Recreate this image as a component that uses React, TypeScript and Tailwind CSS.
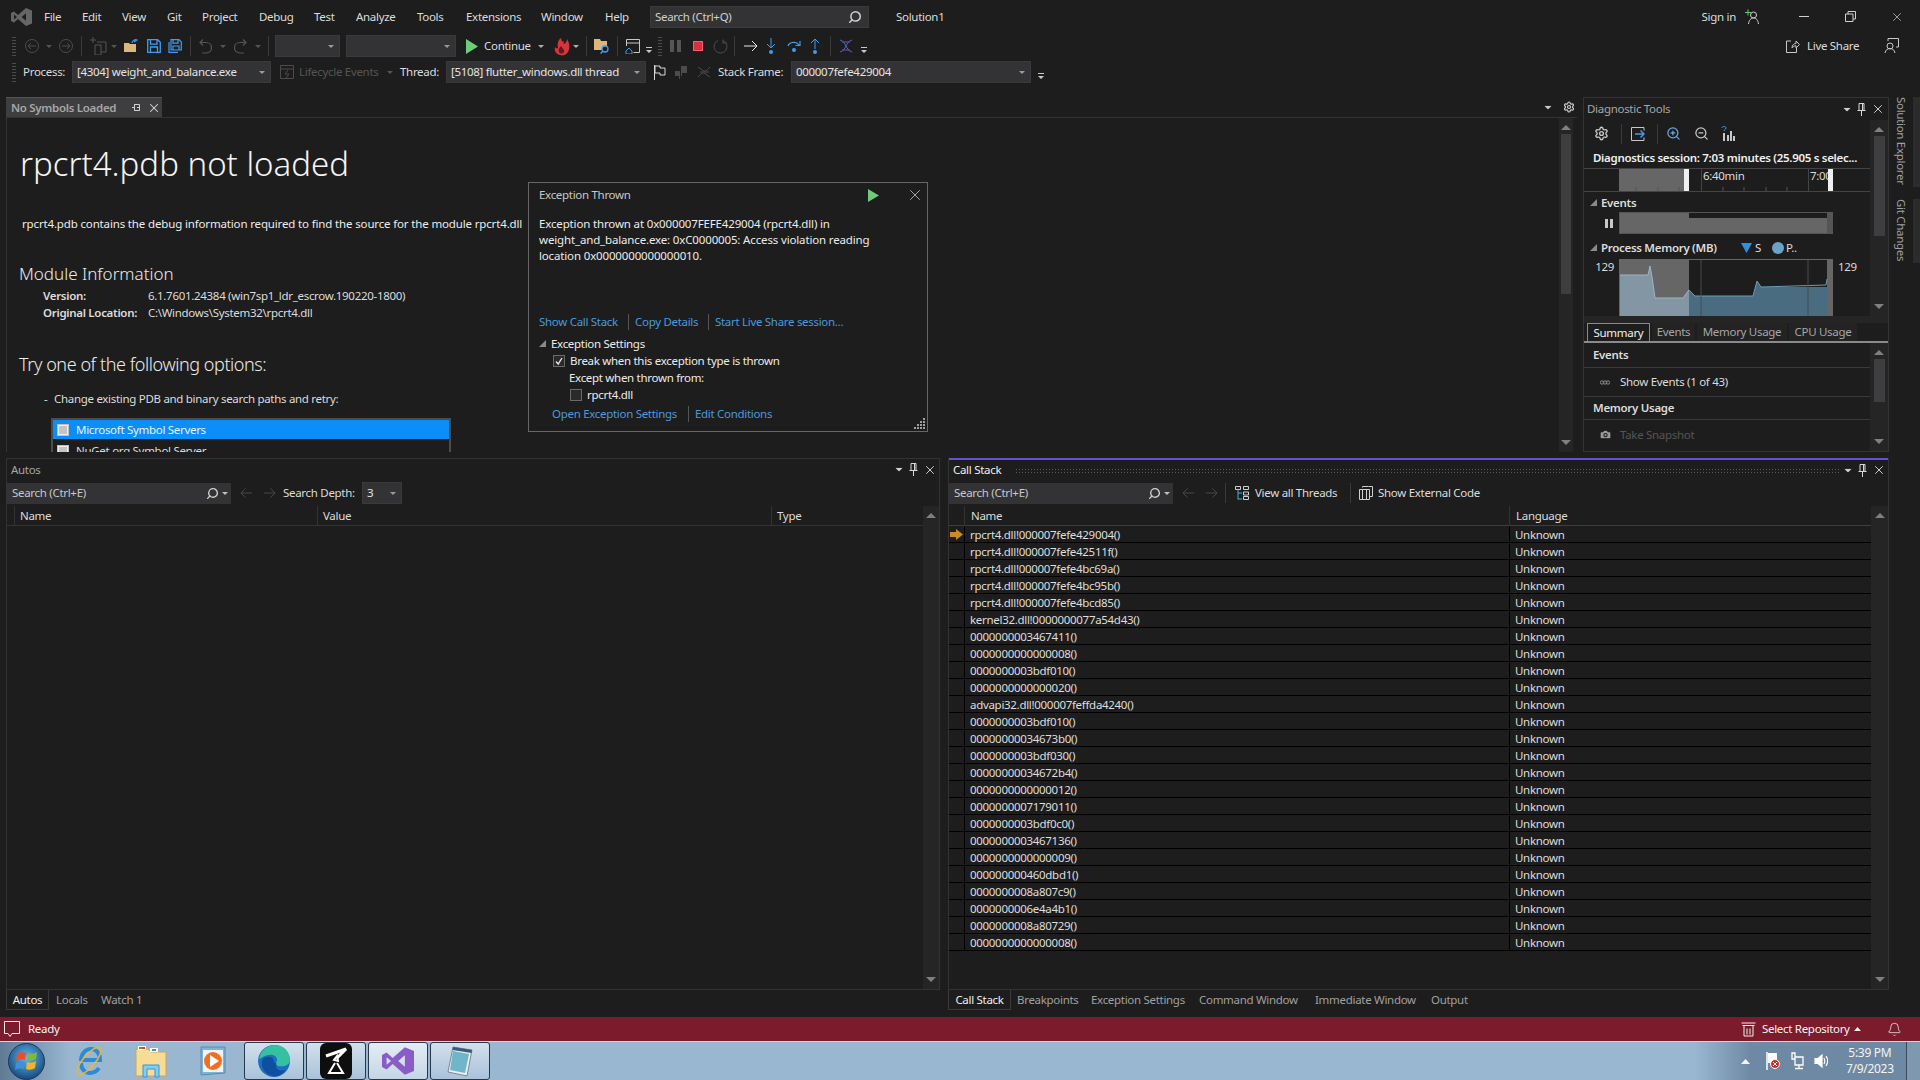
import { X, Settings, ZoomIn, ZoomOut, Camera, Bell, Search } from "lucide-react";

const frames = [
  "rpcrt4.dll!000007fefe429004()",
  "rpcrt4.dll!000007fefe42511f()",
  "rpcrt4.dll!000007fefe4bc69a()",
  "rpcrt4.dll!000007fefe4bc95b()",
  "rpcrt4.dll!000007fefe4bcd85()",
  "kernel32.dll!0000000077a54d43()",
  "0000000003467411()",
  "0000000000000008()",
  "0000000003bdf010()",
  "0000000000000020()",
  "advapi32.dll!000007feffda4240()",
  "0000000003bdf010()",
  "00000000034673b0()",
  "0000000003bdf030()",
  "00000000034672b4()",
  "0000000000000012()",
  "0000000007179011()",
  "0000000003bdf0c0()",
  "0000000003467136()",
  "0000000000000009()",
  "000000000460dbd1()",
  "0000000008a807c9()",
  "0000000006e4a4b1()",
  "0000000008a80729()",
  "0000000000000008()",
];

const menu = [
  ["File", "w-[38px]"],
  ["Edit", "w-[40px]"],
  ["View", "w-[45px]"],
  ["Git", "w-[35px]"],
  ["Project", "w-[57px]"],
  ["Debug", "w-[55px]"],
  ["Test", "w-[42px]"],
  ["Analyze", "w-[61px]"],
  ["Tools", "w-[49px]"],
  ["Extensions", "w-[75px]"],
  ["Window", "w-[64px]"],
  ["Help", "w-[45px]"],
];

const Caret = ({ className = "", color = "#b0b0b0" }: { className?: string; color?: string }) => (
  <svg viewBox="0 0 6 3" className={`h-[3px] w-[6px] shrink-0 ${className}`}>
    <path d="M0 0h6L3 3z" fill={color} />
  </svg>
);

const Sep = ({ className = "" }: { className?: string }) => (
  <div className={`h-[20px] w-px shrink-0 bg-[#3a3a3a] ${className}`} />
);

const Gripper = ({ className = "" }: { className?: string }) => (
  <div className={`h-[21px] w-[4px] shrink-0 bg-[radial-gradient(circle,#4c4c4c_0.6px,transparent_0.7px)] bg-[length:2px_3px] ${className}`} />
);

const Overflow = ({ className = "" }: { className?: string }) => (
  <svg viewBox="0 0 6 7" className={`mt-[8px] h-[7px] w-[6px] shrink-0 ${className}`}>
    <path d="M0 0h6v1H0zM0 3h6L3 6z" fill="#c8c8c8" />
  </svg>
);

const Combo = ({ children, className = "" }: { children?: React.ReactNode; className?: string }) => (
  <div className={`flex h-[22px] shrink-0 items-center justify-between border border-[#3a3a3c] bg-[#333335] pl-[4px] pr-[5px] text-[#e4e4e4] ${className}`}>
    <span className="whitespace-nowrap">{children}</span>
    <Caret color="#9a9a9a" />
  </div>
);

const Arrows = () => (
  <>
    <svg viewBox="0 0 14 12" className="ml-[9px] h-[12px] w-[13px] shrink-0" fill="none" stroke="#4c4c4c" strokeWidth="1">
      <path d="M13 6H1M6 1L1 6l5 5" />
    </svg>
    <svg viewBox="0 0 14 12" className="ml-[10px] h-[12px] w-[13px] shrink-0" fill="none" stroke="#4c4c4c" strokeWidth="1">
      <path d="M1 6h12M8 1l5 5-5 5" />
    </svg>
  </>
);

const SearchBox = ({ text }: { text: string }) => (
  <div className="flex h-[21px] w-[224px] shrink-0 items-center justify-between bg-[#333335] pl-[5px] pr-[3px] text-[#c8c8c8]">
    <span>{text}</span>
    <span className="flex items-center gap-[3px]">
      <Search size={13} strokeWidth={2.6} color="#d0d0d0" className="-scale-x-100" />
      <Caret color="#c0c0c0" />
    </span>
  </div>
);

const Pin = ({ className = "" }: { className?: string }) => (
  <svg viewBox="0 0 9 13" className={`h-[13px] w-[9px] shrink-0 ${className}`} fill="none" stroke="#d8d8d8">
    <path d="M2 .5h5v7H2zM.5 7.5h8M4.5 8v5M5.5 1v6" />
  </svg>
);

const ToolHead = () => (
  <span className="flex items-center">
    <Caret color="#d0d0d0" className="scale-125" />
    <Pin className="ml-[7px]" />
    <X size={14} strokeWidth={1.6} color="#d8d8d8" className="ml-[5px]" />
  </span>
);

const ScrollBar = ({ thumb, w = "w-[17px]", inner = "w-[10px]" }: { thumb: string; w?: string; inner?: string }) => (
  <div className={`flex h-full shrink-0 flex-col items-center bg-[#252526] ${w}`}>
    <svg viewBox="0 0 10 5" className="mt-[7px] h-[5px] w-[10px] shrink-0"><path d="M0 5h10L5 0z" fill="#808080" /></svg>
    <div className={`mt-[4px] bg-[#3e3e40] ${inner} ${thumb}`} />
    <div className="flex-1" />
    <svg viewBox="0 0 10 5" className="mb-[7px] h-[5px] w-[10px] shrink-0"><path d="M0 0h10L5 5z" fill="#808080" /></svg>
  </div>
);

const Tab = ({ label, active, className = "" }: { label: string; active?: boolean; className?: string }) => (
  <div className={`flex h-[20px] items-center whitespace-nowrap ${active ? "border-x border-b border-[#3a3a3a] text-[#f0f0f0]" : "text-[#a0a0a0]"} ${className}`}>
    {label}
  </div>
);

const Triangle = () => (
  <svg viewBox="0 0 7 7" className="h-[7px] w-[7px] shrink-0"><path d="M7 0v7H0z" fill="#8a8a8a" /></svg>
);

const Check = ({ on, className = "" }: { on?: boolean; className?: string }) => (
  <div className={`flex h-[12px] w-[12px] shrink-0 items-center justify-center border border-[#6a6a6a] bg-[#2a2a2a] ${className}`}>
    {on && (
      <svg viewBox="0 0 10 10" className="h-[10px] w-[10px]" fill="none" stroke="#e6e6e6" strokeWidth="1.4">
        <path d="M2 5.5L4.2 8 8 2" />
      </svg>
    )}
  </div>
);

const ListCheck = () => (
  <div className="flex h-[12px] w-[12px] shrink-0 items-center justify-center border border-[#c0c0c0] bg-[#f0f0f0]">
    <div className="h-[8px] w-[8px] bg-[#c4c4c4]" />
  </div>
);

const VsMark = ({ fill, className = "" }: { fill: string; className?: string }) => (
  <svg viewBox="0 0 21 18" className={className}>
    <path
      fillRule="evenodd"
      d="M0 5l3-1.5L7 7l8-7 6 2.5v13L15 18l-8-7-4 3.5L0 13zM3 6.5v5L6 9zM15 5.2L10.6 9l4.4 3.8z"
      fill={fill}
    />
  </svg>
);

const TitleBar = () => (
  <div className="flex h-[33px] shrink-0 items-center">
    <VsMark fill="#666666" className="ml-[11px] h-[18px] w-[21px] shrink-0" />
    <nav className="ml-[12px] flex">
      {menu.map(([label, w]) => (
        <span key={label} className={`whitespace-nowrap ${w}`}>{label}</span>
      ))}
    </nav>
    <div className="flex h-[22px] w-[219px] shrink-0 items-center justify-between border border-[#3a3a3c] bg-[#333335] pl-[4px] pr-[6px] text-[#cfcfcf]">
      <span>Search (Ctrl+Q)</span>
      <Search size={14} strokeWidth={2.6} color="#d0d0d0" className="-scale-x-100" />
    </div>
    <span className="ml-[27px] text-[#dcdcdc]">Solution1</span>
    <span className="ml-auto">Sign in</span>
    <svg viewBox="0 0 16 16" className="ml-[8px] h-[16px] w-[16px] shrink-0" fill="none" stroke="#d0d0d0">
      <circle cx="9.5" cy="6" r="3" />
      <path d="M4.5 15c.5-4 2.5-6 5-6s4.500 2 5 6" />
      <path d="M1 3.500h6M4 .5v6" stroke="#5fd068" />
    </svg>
    <div className="ml-[39px] h-px w-[10px] bg-[#d0d0d0]" />
    <svg viewBox="0 0 11 11" className="ml-[36px] h-[11px] w-[11px]" fill="none" stroke="#d0d0d0">
      <path d="M.5 3h7.500v7.500H.5zM3 3V.5h7.500V8H8" />
    </svg>
    <X size={14} strokeWidth={1.2} color="#d0d0d0" className="ml-[34px] mr-[16px]" />
  </div>
);

const Toolbar1 = () => (
  <div className="flex h-[26px] shrink-0 items-center">
    <Gripper className="ml-[12px]" />
    <svg viewBox="0 0 14 14" className="ml-[9px] h-[14px] w-[14px] shrink-0" fill="none" stroke="#4c4c4c"><circle cx="7" cy="7" r="6.500" /><path d="M11 7H3M6 4L3 7l3 3" /></svg>
    <Caret className="ml-[7px]" color="#555" />
    <svg viewBox="0 0 14 14" className="ml-[7px] h-[14px] w-[14px] shrink-0" fill="none" stroke="#4c4c4c"><circle cx="7" cy="7" r="6.500" /><path d="M3 7h8M8 4l3 3-3 3" /></svg>
    <Sep className="ml-[8px]" />
    <svg viewBox="0 0 17 18" className="ml-[8px] h-[18px] w-[17px] shrink-0" fill="none" stroke="#555"><path d="M7 5h9v10h-5v3H5V8h6v7M3 0v6M0 3h6" /></svg>
    <Caret className="ml-[4px]" color="#555" />
    <svg viewBox="0 0 15 14" className="ml-[7px] h-[14px] w-[15px] shrink-0">
      <path d="M0 4h5l1 1h6v8H0z" fill="#dcb67a" />
      <path d="M8 4c0-2 2-3 4-3M10-.5L13 1l-3 2" fill="none" stroke="#2f8fe0" strokeWidth="1.300" />
    </svg>
    <svg viewBox="0 0 14 14" className="ml-[8px] h-[14px] w-[14px] shrink-0" fill="none" stroke="#3f9cf0" strokeWidth="1.300"><path d="M.7.7h10l2.600 2.600v10H.7zM3.500.7v4.500h6.500V.7M3.500 13.300V8h7v5.300" /></svg>
    <svg viewBox="0 0 14 14" className="ml-[7px] h-[14px] w-[14px] shrink-0" fill="none" stroke="#3f9cf0" strokeWidth="1.200"><path d="M3 .7h8l2.300 2.300v8H3zM5 .7v3.500h5V.7M5 11V7h6v4M1 3v10.300h9" /></svg>
    <Sep className="ml-[8px]" />
    <svg viewBox="0 0 13 15" className="ml-[8px] h-[15px] w-[13px] shrink-0" fill="none" stroke="#555" strokeWidth="1.200"><path d="M3 14h4c3.500 0 5.500-2.500 5.500-5.500S10 3.500 7 3.500H1M4 .5l-3 3 3 3" /></svg>
    <Caret className="ml-[8px]" color="#555" />
    <svg viewBox="0 0 13 15" className="ml-[8px] h-[15px] w-[13px] shrink-0" fill="none" stroke="#555" strokeWidth="1.200"><path d="M10 14H6C2.500 14 .5 11.500.5 8.500S3 3.500 6 3.500h6M9 .5l3 3-3 3" /></svg>
    <Caret className="ml-[8px]" color="#555" />
    <Sep className="ml-[7px]" />
    <Combo className="ml-[6px] w-[65px] bg-[#2c2c2c]" />
    <Combo className="ml-[6px] w-[110px] bg-[#2c2c2c]" />
    <svg viewBox="0 0 12 15" className="ml-[10px] h-[15px] w-[12px] shrink-0"><path d="M0 0l12 7.500L0 15z" fill="#6ecb78" /></svg>
    <span className="ml-[6px] w-[48px] whitespace-nowrap">Continue</span>
    <Caret className="ml-[6px]" />
    <svg viewBox="0 0 17 19" className="ml-[9px] h-[19px] w-[17px] shrink-0">
      <path d="M8 1c1 3 0 4 3 3 0 1-1 2 0 3 2-1 3-3 3-5 3 5 3 9 1 13-2 3-5 4-8 3C3 17 1 14 2 10c1 1 2 2 3 1-1-4 0-8 3-10z" fill="#d9343c" />
      <path d="M8 9c-2 2-3 4-2 6 1 2 4 2 5 0 1-2-1-3-3-6z" fill="#5a1d22" />
    </svg>
    <Caret className="ml-[3px]" />
    <Sep className="ml-[7px]" />
    <svg viewBox="0 0 16 16" className="ml-[7px] h-[16px] w-[16px] shrink-0">
      <path d="M0 1h6l1 2h6v9H0z" fill="#dcb67a" />
      <circle cx="11" cy="11" r="3" fill="#1d1d1d" stroke="#3f9cf0" strokeWidth="1.300" />
      <path d="M9 13l-2.500 2.500" stroke="#3f9cf0" strokeWidth="1.500" />
    </svg>
    <Sep className="ml-[7px]" />
    <svg viewBox="0 0 16 16" className="ml-[7px] h-[16px] w-[16px] shrink-0" fill="none" stroke="#c8c8c8"><path d="M1.500 1.500h13v13h-6M1.500 5h13M1.500 1.500V8" /><path d="M1 13l3-3 3 3v3H1z" stroke="#3f9cf0" /></svg>
    <Overflow className="ml-[5px]" />
    <Gripper className="ml-[6px]" />
    <div className="ml-[8px] flex h-[12px] w-[11px] shrink-0 justify-between"><i className="w-[4px] bg-[#555]" /><i className="w-[4px] bg-[#555]" /></div>
    <div className="ml-[12px] h-[10px] w-[10px] shrink-0 border border-[#f06070] bg-[#d8303f]" />
    <svg viewBox="0 0 15 15" className="ml-[10px] h-[15px] w-[15px] shrink-0" fill="none" stroke="#4c4c4c"><path d="M10 1.500A6.500 6.500 0 1 1 5 1.500M10 .5v3.500h3.500" /></svg>
    <Sep className="ml-[6px]" />
    <svg viewBox="0 0 14 12" className="ml-[9px] h-[12px] w-[14px] shrink-0" fill="none" stroke="#e8e8e8"><path d="M0 6h13M8 1l5 5-5 5" /></svg>
    <svg viewBox="0 0 12 16" className="ml-[7px] h-[16px] w-[12px] shrink-0"><path d="M6 0v9M2 6l4 4 4-4" fill="none" stroke="#3f9cf0" /><circle cx="6" cy="14" r="2" fill="#3f9cf0" /></svg>
    <svg viewBox="0 0 14 12" className="ml-[10px] h-[12px] w-[14px] shrink-0"><path d="M1 6a6 5 0 0 1 11-1M13 1v4.500H8.500" fill="none" stroke="#3f9cf0" strokeWidth="1.200" /><circle cx="7" cy="10" r="2" fill="#3f9cf0" /></svg>
    <svg viewBox="0 0 12 16" className="ml-[8px] h-[16px] w-[12px] shrink-0"><path d="M6 11V1M2 5l4-4 4 4" fill="none" stroke="#3f9cf0" /><circle cx="6" cy="14" r="2" fill="#3f9cf0" /></svg>
    <Sep className="ml-[9px]" />
    <svg viewBox="0 0 14 16" className="ml-[8px] h-[16px] w-[14px] shrink-0" fill="none" strokeWidth="1"><path d="M1 14C8 12 6 4 13 2" stroke="#6a56b8" /><path d="M1 2c7 2 5 10 12 12" stroke="#2f7cc0" /><path d="M3 4h8M3 12h8" stroke="#6a56b8" /></svg>
    <Overflow className="ml-[8px]" />
    <svg viewBox="0 0 14 14" className="ml-auto h-[14px] w-[14px] shrink-0" fill="none" stroke="#c8c8c8"><path d="M5 2H.5v11.500h10V9M6 9c0-3 2-4.500 4-4.500V2l3.500 3.500L10 9V6.800C8 6.800 7 8 6 9z" /></svg>
    <span className="ml-[7px] w-[77px] whitespace-nowrap">Live Share</span>
    <svg viewBox="0 0 15 16" className="mr-[21px] h-[16px] w-[15px] shrink-0" fill="none" stroke="#c8c8c8"><circle cx="6" cy="8" r="3" /><path d="M1 15c.5-3 2.500-4.500 5-4.500s4.500 1.500 5 4.500M4 3V.5h10.500V9H12" /></svg>
  </div>
);

const Toolbar2 = () => (
  <div className="flex h-[26px] shrink-0 items-center">
    <Gripper className="ml-[12px]" />
    <span className="ml-[7px] w-[49px] whitespace-nowrap">Process:</span>
    <Combo className="w-[199px]">[4304] weight_and_balance.exe</Combo>
    <svg viewBox="0 0 14 14" className="ml-[9px] h-[14px] w-[14px] shrink-0" fill="none" stroke="#4c4c4c"><path d="M.5.5h13v13H.5zM.5 4h13M8 5L5 9h4l-3 4" /></svg>
    <span className="ml-[5px] w-[83px] whitespace-nowrap text-[#555]">Lifecycle Events</span>
    <Caret className="ml-[5px]" color="#555" />
    <span className="ml-[7px] w-[46px] whitespace-nowrap">Thread:</span>
    <Combo className="w-[200px]">[5108] flutter_windows.dll thread</Combo>
    <svg viewBox="0 0 12 15" className="ml-[8px] h-[15px] w-[12px] shrink-0"><path d="M.5 0v15" stroke="#d8d8d8" /><path d="M1 1h5v2h5v7H6V8H1z" fill="none" stroke="#d8d8d8" /></svg>
    <svg viewBox="0 0 13 15" className="ml-[9px] h-[15px] w-[13px] shrink-0" fill="#4c4c4c"><path d="M0 6h5v8H4v-3H0zM6 1h6v7H7v3H6z" /></svg>
    <svg viewBox="0 0 15 12" className="ml-[9px] h-[12px] w-[15px] shrink-0" fill="none" stroke="#4c4c4c"><path d="M1 1l3 2c3 3 5 3 9-2M1 11c4-5 6-5 9-2l3 2M3 6h9" /></svg>
    <span className="ml-[6px] w-[73px] whitespace-nowrap">Stack Frame:</span>
    <Combo className="w-[240px]">000007fefe429004</Combo>
    <Overflow className="ml-[7px]" />
  </div>
);

const DocPanel = () => (
  <div className="flex h-full w-[1571px] shrink-0 flex-col">
    <div className="flex h-[20px] shrink-0 items-center">
      <div className="flex h-full w-[156px] items-center border-t border-[#555] bg-[#3e3e40] pl-[5px] font-semibold text-[#a6a6a6]">
        <span className="w-[121px] whitespace-nowrap">No Symbols Loaded</span>
        <svg viewBox="0 0 9 9" className="h-[9px] w-[9px]" fill="none" stroke="#d0d0d0"><path d="M0 4.500h2M2.500 1.500h5v6h-5zM2.500 1.500v6M7 4.500H5" /></svg>
        <X size={14} strokeWidth={1.8} color="#d8d8d8" className="ml-[6px]" />
      </div>
      <Caret className="ml-auto scale-125" color="#c8c8c8" />
      <Settings size={12} strokeWidth={2.4} color="#d0d0d0" className="ml-[12px] mr-[2px]" />
    </div>
    <div className="flex min-h-0 flex-1 border-l border-t border-[#333]">
      <div className="min-w-0 flex-1 overflow-hidden">
        <h1 className="pl-[13px] pt-[26px] text-[33px] font-light leading-[40px] tracking-normal text-[#f4f4f4]">rpcrt4.pdb not loaded</h1>
        <p className="mt-[32px] pl-[15px] leading-[16px] tracking-[-0.15px] text-[#ececec]">
          rpcrt4.pdb contains the debug information required to find the source for the module rpcrt4.dll
        </p>
        <h2 className="mt-[31px] pl-[12px] text-[17px] font-light leading-[22px] tracking-normal text-[#ececec]">Module Information</h2>
        <div className="ml-[36px] mt-[2px] grid w-[500px] grid-cols-[105px_1fr] leading-[17px]">
          <b className="font-semibold">Version:</b>
          <span>6.1.7601.24384 (win7sp1_ldr_escrow.190220-1800)</span>
          <b className="font-semibold">Original Location:</b>
          <span>C:\Windows\System32\rpcrt4.dll</span>
        </div>
        <h2 className="mt-[31px] pl-[12px] text-[18px] font-light leading-[24px] tracking-[-0.43px] text-[#ececec]">Try one of the following options:</h2>
        <p className="ml-[37px] mt-[15px] flex leading-[16px]">
          <span className="w-[10px]">-</span>
          <span>Change existing PDB and binary search paths and retry:</span>
        </p>
        <div className="ml-[44px] mt-[11px] w-[400px] border-2 border-[#4c4c4c] pb-[20px]">
          <div className="flex h-[19px] items-center bg-[#0a8ffa] pl-[4px] text-[#f0f0f0]">
            <ListCheck />
            <span className="ml-[7px]">Microsoft Symbol Servers</span>
          </div>
          <div className="mt-[2px] flex h-[19px] items-center pl-[4px]">
            <ListCheck />
            <span className="ml-[7px]">NuGet.org Symbol Server</span>
          </div>
        </div>
      </div>
      <ScrollBar w="w-[14px]" inner="w-[10px]" thumb="h-[160px]" />
      <div className="w-[4px]" />
    </div>
  </div>
);

const MemoryChart = () => (
  <svg viewBox="0 0 214 57" className="h-[57px] w-[214px] shrink-0">
    <rect width="70" height="57" fill="#666" />
    <rect x="208" width="6" height="57" fill="#666" />
    <path d="M1 16H29L31 7 33 18 36 39H64L70 31V57H0V16z" fill="#8296a4" />
    <path d="M70 31L76 37H134L138 22 142 28H208V57H70z" fill="#4a6c80" />
    <path d="M1 16H29L31 7 33 18 36 39H64L70 31" fill="none" stroke="#a4b4c0" />
    <path d="M70 31L76 37H134L138 22 142 28 207 26 208 20" fill="none" stroke="#6b9db8" />
    <path d="M82 0V57M189 0V57" stroke="#4a4a4a" />
    <path d="M.5 57V.5H214M213.500 0V57" fill="none" stroke="#666" />
  </svg>
);

const DiagPanel = () => (
  <div className="ml-[6px] flex h-full w-[306px] shrink-0 flex-col border border-[#333]">
    <div className="flex h-[22px] shrink-0 items-center justify-between pl-[3px] pr-[3px] text-[#a6a6a6]">
      <span>Diagnostic Tools</span>
      <ToolHead />
    </div>
    <div className="flex h-[196px] shrink-0">
      <div className="min-w-0 flex-1 overflow-hidden">
        <div className="flex h-[27px] items-center">
          <Settings size={15} strokeWidth={2.2} color="#c8c8c8" className="ml-[10px]" />
          <Sep className="ml-[12px]" />
          <svg viewBox="0 0 14 14" className="ml-[9px] h-[14px] w-[14px]" fill="none"><path d="M13 .5H.5v13H13M13 .5v3M13 13.500v-3" stroke="#c8c8c8" /><path d="M4 7h9M9.500 3.500L13 7l-3.500 3.500" stroke="#3f9cf0" strokeWidth="1.500" /></svg>
          <Sep className="ml-[12px]" />
          <ZoomIn size={15} color="#6aa8e0" className="ml-[8px]" />
          <ZoomOut size={15} color="#c8c8c8" className="ml-[13px]" />
          <svg viewBox="0 0 14 15" className="ml-[12px] h-[15px] w-[14px]"><path d="M2 7h2v8H2zM6 9h2v6H6zM9 5h2v10H9zM12 10h2v5h-2z" fill="#c8c8c8" /><path d="M1 2c0-2 4-2 4 0 0 1.500-2 1.500-2 3" fill="none" stroke="#3f9cf0" /></svg>
        </div>
        <div className="flex h-[21px] items-center pl-[9px] font-semibold text-[#f0f0f0]">
          <span className="whitespace-nowrap">Diagnostics session: 7:03 minutes (25.905 s selec...</span>
        </div>
        <div className="h-[24px] border-y border-[#444] pl-[35px]">
          <div className="relative flex h-full w-[214px] leading-[14px]">
            <div className="w-[65px] bg-[#666]" />
            <div className="w-[5px] bg-[#f0f0f0]" />
            <div className="w-[12px]" />
            <div className="w-[107px] border-l border-[#444] pl-[1px]">6:40min</div>
            <div className="w-[20px] overflow-hidden border-l border-[#444] pl-[1px]">7:00</div>
            <div className="w-[5px] bg-[#f0f0f0]" />
            <svg viewBox="0 0 214 4" className="absolute bottom-0 left-0 h-[4px] w-[214px]">
              <path d="M17 0v4M39 0v4M60 0v4M104 0v4M125 0v4M147 0v4M168 0v4" stroke="#555" />
            </svg>
          </div>
        </div>
        <div className="flex h-[20px] items-center pl-[6px] pt-[1px] font-semibold">
          <Triangle />
          <span className="ml-[4px]">Events</span>
        </div>
        <div className="flex h-[22px]">
          <div className="flex w-[35px] items-center justify-end pr-[6px]">
            <div className="flex h-[9px] w-[8px] justify-between"><i className="w-[3px] bg-[#c8c8c8]" /><i className="w-[3px] bg-[#c8c8c8]" /></div>
          </div>
          <div className="flex w-[214px] border border-[#555]">
            <div className="w-[69px] bg-[#666]" />
            <div className="flex flex-1 flex-col"><div className="h-[5px]" /><div className="flex-1 bg-[#666]" /></div>
            <div className="w-[5px] bg-[#555]" />
          </div>
        </div>
        <div className="flex h-[25px] items-center pl-[6px] pt-[2px] font-semibold">
          <Triangle />
          <span className="ml-[4px] w-[140px] whitespace-nowrap">Process Memory (MB)</span>
          <svg viewBox="0 0 11 10" className="h-[10px] w-[11px] shrink-0"><path d="M0 0h11L5.500 10z" fill="#2f8fe0" /></svg>
          <span className="ml-[3px] w-[17px] font-normal">S</span>
          <div className="h-[12px] w-[12px] shrink-0 rounded-full bg-[#6ba2c8]" />
          <span className="ml-[2px] font-normal">P..</span>
        </div>
        <div className="flex h-[57px]">
          <div className="w-[35px] pr-[5px] text-right leading-[16px]">129</div>
          <MemoryChart />
          <div className="pl-[5px] leading-[16px]">129</div>
        </div>
      </div>
      <ScrollBar w="w-[18px]" inner="w-[11px]" thumb="h-[100px]" />
    </div>
    <div className="h-[7px] shrink-0 bg-[#252526]" />
    <div className="flex h-[20px] shrink-0 items-stretch border-b-2 border-[#8a8a8a] pl-[3px] text-[#a6a6a6]">
      <div className="flex w-[63px] items-center justify-center border-x border-t border-[#8a8a8a] text-[#f0f0f0]">Summary</div>
      <div className="ml-[2px] flex w-[43px] items-center justify-center bg-[#232323]">Events</div>
      <div className="ml-[2px] flex w-[90px] items-center justify-center bg-[#232323]">Memory Usage</div>
      <div className="ml-[2px] flex w-[68px] items-center justify-center bg-[#232323]">CPU Usage</div>
    </div>
    <div className="flex min-h-0 flex-1">
      <div className="min-w-0 flex-1">
        <div className="flex h-[25px] items-center border-b border-[#3a3a3a] pl-[9px] font-semibold">Events</div>
        <div className="flex h-[29px] items-center border-b border-[#3a3a3a] pl-[16px]">
          <svg viewBox="0 0 10 5" className="h-[5px] w-[10px]" fill="none" stroke="#8a8a8a"><circle cx="2" cy="2.500" r="1.700" /><circle cx="5" cy="2.500" r="1.700" /><circle cx="8" cy="2.500" r="1.700" /></svg>
          <span className="ml-[10px]">Show Events (1 of 43)</span>
        </div>
        <div className="flex h-[23px] items-center border-b border-[#3a3a3a] pl-[9px] font-semibold">Memory Usage</div>
        <div className="flex h-[29px] items-center pl-[15px] text-[#555]">
          <Camera size={13} color="#1d1d1d" fill="#9a9a9a" />
          <span className="ml-[8px]">Take Snapshot</span>
        </div>
      </div>
      <ScrollBar w="w-[18px]" inner="w-[11px]" thumb="h-[43px]" />
    </div>
  </div>
);

const SideStrip = () => (
  <div className="flex h-full w-[31px] shrink-0 flex-col pl-[4px]">
    <div className="flex h-[90px] justify-between">
      <span className="whitespace-nowrap text-[#a0a0a0] [writing-mode:vertical-rl]">Solution Explorer</span>
      <div className="w-[7px] bg-[#2c2c2c]" />
    </div>
    <div className="mt-[12px] flex h-[64px] justify-between">
      <span className="whitespace-nowrap text-[#a0a0a0] [writing-mode:vertical-rl]">Git Changes</span>
      <div className="w-[7px] bg-[#2c2c2c]" />
    </div>
  </div>
);

const HeaderCell = ({ className, children }: { className: string; children?: React.ReactNode }) => (
  <div className={`flex h-full shrink-0 items-center border-r border-[#333] pl-[5px] ${className}`}>{children}</div>
);

const AutosPanel = () => (
  <div className="flex h-full w-[934px] shrink-0 flex-col">
    <div className="flex h-[532px] flex-col border-x border-y border-[#333]">
      <div className="flex h-[23px] shrink-0 items-center justify-between pb-[2px] pl-[4px] pr-[2px] text-[#a6a6a6]">
        <span>Autos</span>
        <ToolHead />
      </div>
      <div className="flex h-[24px] shrink-0 items-center pb-[2px]">
        <SearchBox text="Search (Ctrl+E)" />
        <Arrows />
        <span className="ml-[7px] w-[79px] whitespace-nowrap">Search Depth:</span>
        <Combo className="h-[20px] w-[40px]">3</Combo>
      </div>
      <div className="flex min-h-0 flex-1">
        <div className="min-w-0 flex-1">
          <div className="flex h-[20px] border-b border-[#333]">
            <HeaderCell className="w-[8px] !pl-0" />
            <HeaderCell className="w-[303px]">Name</HeaderCell>
            <HeaderCell className="w-[454px]">Value</HeaderCell>
            <div className="flex items-center pl-[5px]">Type</div>
          </div>
        </div>
        <ScrollBar w="w-[16px]" inner="w-[9px]" thumb="h-[0px]" />
      </div>
    </div>
    <div className="flex pl-[0px]">
      <Tab active label="Autos" className="w-[43px] justify-center" />
      <Tab label="Locals" className="ml-[7px] w-[45px]" />
      <Tab label="Watch 1" />
    </div>
  </div>
);

const CallStackPanel = () => (
  <div className="ml-[8px] flex h-full w-[941px] shrink-0 flex-col">
    <div className="flex h-[532px] flex-col border-x border-b border-[#333]">
      <div className="h-[2px] shrink-0 bg-[#6650d8]" />
      <div className="flex h-[22px] shrink-0 items-center pb-[2px] pl-[4px] pr-[2px]">
        <span className="w-[62px] whitespace-nowrap text-[#f0f0f0]">Call Stack</span>
        <div className="h-[5px] flex-1 bg-[radial-gradient(circle,#5a5a5a_0.7px,transparent_0.8px)] bg-[length:3px_3px]" />
        <div className="ml-[6px]"><ToolHead /></div>
      </div>
      <div className="flex h-[24px] shrink-0 items-center pb-[2px]">
        <SearchBox text="Search (Ctrl+E)" />
        <Arrows />
        <Sep className="ml-[7px]" />
        <svg viewBox="0 0 14 14" className="ml-[9px] h-[14px] w-[14px] shrink-0" fill="none" stroke="#d0d0d0"><path d="M.5.5h5v3h-5zM8.500.5h5v3h-5zM8.500 6h5v3h-5zM8.500 10.500h5v3h-5z" /><path d="M3 3.500V13.500M3 7h4M3 13h4" stroke="#39b5e8" /></svg>
        <span className="ml-[6px] w-[95px] whitespace-nowrap">View all Threads</span>
        <Sep />
        <svg viewBox="0 0 14 14" className="ml-[8px] h-[14px] w-[14px] shrink-0" fill="none" stroke="#d0d0d0"><path d="M3.500 1.500V.5h6l4 0v10h-3M.5 3.500h10v10H.5zM3.500 3.500h4v10h-4z" /></svg>
        <span className="ml-[5px] whitespace-nowrap">Show External Code</span>
      </div>
      <div className="flex min-h-0 flex-1">
        <div className="min-w-0 flex-1">
          <div className="flex h-[20px] border-b border-[#3e3e3e]">
            <HeaderCell className="w-[16px] !pl-0" />
            <HeaderCell className="w-[545px] !pl-[6px]">Name</HeaderCell>
            <div className="flex items-center pl-[6px]">Language</div>
          </div>
          {frames.map((f, i) => (
            <div key={i} className="flex h-[17px] items-center border-b border-black leading-[17px]">
              <div className="flex h-full w-[16px] shrink-0 items-center justify-center border-r border-black">
                {i === 0 && (
                  <svg viewBox="0 0 13 11" className="h-[11px] w-[13px]"><path d="M0 3h6V0l7 5.500L6 11V8H0z" fill="#cc8a24" /></svg>
                )}
              </div>
              <div className="h-full w-[545px] shrink-0 whitespace-nowrap border-r border-black pl-[5px] text-[#dedede]">{f}</div>
              <div className="h-full pl-[5px] text-[#dedede]">Unknown</div>
            </div>
          ))}
        </div>
        <ScrollBar inner="w-[9px]" thumb="h-[0px]" />
      </div>
    </div>
    <div className="flex pl-[0px]">
      <Tab active label="Call Stack" className="w-[63px] justify-center" />
      <Tab label="Breakpoints" className="ml-[6px] w-[74px]" />
      <Tab label="Exception Settings" className="w-[108px]" />
      <Tab label="Command Window" className="w-[116px]" />
      <Tab label="Immediate Window" className="w-[116px]" />
      <Tab label="Output" />
    </div>
  </div>
);

const ExceptionPopup = () => (
  <div className="absolute left-[528px] top-[182px] h-[250px] w-[400px] border border-[#666] bg-[#1d1d1d] pl-[10px] text-[#ececec]">
    <div className="flex h-[24px] items-center">
      <span className="text-[#c8c8c8]">Exception Thrown</span>
      <svg viewBox="0 0 11 13" className="ml-auto h-[13px] w-[11px]"><path d="M0 0l11 6.500L0 13z" fill="#6ecb78" /></svg>
      <X size={18} strokeWidth={1} color="#d0d0d0" className="ml-[27px] mr-[3px]" />
    </div>
    <p className="mt-[9px] w-[345px] leading-[16px] tracking-[-0.15px]">
      Exception thrown at 0x000007FEFE429004 (rpcrt4.dll) in weight_and_balance.exe: 0xC0000005: Access violation reading location 0x0000000000000010.
    </p>
    <div className="mt-[50px] flex h-[16px] items-center text-[#4a9ade]">
      <span className="w-[89px] whitespace-nowrap">Show Call Stack</span>
      <span className="h-[16px] w-px bg-[#555]" />
      <span className="ml-[6px] w-[73px] whitespace-nowrap">Copy Details</span>
      <span className="h-[16px] w-px bg-[#555]" />
      <span className="ml-[6px] whitespace-nowrap">Start Live Share session...</span>
    </div>
    <div className="mt-[5px] flex h-[17px] items-center">
      <Triangle />
      <span className="ml-[5px]">Exception Settings</span>
    </div>
    <div className="ml-[14px] flex h-[17px] items-center">
      <Check on />
      <span className="ml-[5px]">Break when this exception type is thrown</span>
    </div>
    <div className="ml-[30px] flex h-[17px] items-center">Except when thrown from:</div>
    <div className="ml-[31px] flex h-[17px] items-center">
      <Check />
      <span className="ml-[5px]">rpcrt4.dll</span>
    </div>
    <div className="ml-[13px] mt-[3px] flex h-[16px] items-center text-[#4a9ade]">
      <span className="w-[136px] whitespace-nowrap">Open Exception Settings</span>
      <span className="h-[16px] w-px bg-[#555]" />
      <span className="ml-[6px] whitespace-nowrap">Edit Conditions</span>
    </div>
    <svg viewBox="0 0 11 11" className="absolute bottom-[2px] right-[2px] h-[11px] w-[11px]" fill="#a0a0a0">
      <path d="M9 0h2v2H9zM6 3h2v2H6zM9 3h2v2H9zM3 6h2v2H3zM6 6h2v2H6zM9 6h2v2H9zM0 9h2v2H0zM3 9h2v2H3zM6 9h2v2H6zM9 9h2v2H9z" />
    </svg>
  </div>
);

const StatusBar = () => (
  <div className="flex h-[24px] shrink-0 items-center bg-[#7c1b2b] text-[#f4f4f4]">
    <svg viewBox="0 0 16 17" className="ml-[4px] h-[17px] w-[16px]" fill="none" stroke="#f0f0f0"><path d="M.5.5h15v12H8l-2 3-2-3H.5z" /></svg>
    <span className="ml-[8px]">Ready</span>
    <svg viewBox="0 0 15 15" className="ml-auto h-[15px] w-[15px]" fill="none" stroke="#f0f0f0"><path d="M.5 1h14M1.500 3.500h12M3 3.500V14h9V3.500M6 6.500v6M9 6.500v6" /></svg>
    <span className="ml-[6px] w-[92px] whitespace-nowrap">Select Repository</span>
    <svg viewBox="0 0 7 4" className="h-[4px] w-[7px]"><path d="M0 4h7L3.500 0z" fill="#f0f0f0" /></svg>
    <Bell size={15} strokeWidth={1.2} color="#f0f0f0" className="ml-[26px] mr-[18px]" />
  </div>
);

const Tile = ({ children, className = "" }: { children: React.ReactNode; className?: string }) => (
  <div className={`flex h-[38px] w-[60px] shrink-0 items-center justify-center rounded-[3px] border border-[#26384a] bg-linear-to-b from-[#d3e0ec] to-[#a9c2da] ${className}`}>
    {children}
  </div>
);

const Taskbar = () => (
  <div className="flex h-[39px] shrink-0 items-center border-t border-[#c8d8e6] bg-[#9ab7d2]">
    <div className="flex h-full w-[70px] shrink-0 items-center bg-linear-to-r from-[#5f7a94] to-transparent pl-[8px]">
      <svg viewBox="0 0 37 37" className="h-[37px] w-[37px]">
        <defs>
          <radialGradient id="orb" cx="50%" cy="40%" r="60%">
            <stop offset="0%" stopColor="#6ab6ea" />
            <stop offset="100%" stopColor="#144a80" />
          </radialGradient>
        </defs>
        <circle cx="18.500" cy="18.500" r="18" fill="url(#orb)" stroke="#1c3a58" />
        <path d="M9 11c3-2 6-2 9-1l-1 7c-3-1-6-1-9 1z" fill="#e8502a" />
        <path d="M20 10c3 1 6 1 9-1l-1 7c-3 2-6 2-9 1z" fill="#7fba3a" />
        <path d="M8 20c3-2 6-2 9-1l-1 7c-3-1-6-1-9 1z" fill="#3a92d8" />
        <path d="M19 19c3 1 6 1 9-1l-1 7c-3 2-6 2-9 1z" fill="#f2b52a" />
      </svg>
    </div>
    <svg viewBox="0 0 32 36" className="ml-[3px] h-[36px] w-[32px] shrink-0" fill="none">
      <path d="M8 18c0-8 5-12 10-12s9 4 9 11H8m0 3c0 6 4 10 9 10 4 0 7-2 9-5" stroke="#2a8bd8" strokeWidth="4" />
      <ellipse cx="16" cy="18" rx="17" ry="6" transform="rotate(-50 16 18)" stroke="#f2b52a" strokeWidth="1.500" />
    </svg>
    <svg viewBox="0 0 36 36" className="ml-[28px] h-[36px] w-[36px] shrink-0">
      <path d="M3 6h12l3 3h15v24H3z" fill="#f6dc94" stroke="#c8a85a" />
      <path d="M5 3h8v4H5zM17 5h8v4h-8z" fill="#fff" />
      <path d="M6 4h3v2H6z" fill="#3aa84a" /><path d="M9 4h3v2H9z" fill="#d8403a" /><path d="M19 6h4v2h-4z" fill="#3a92d8" />
      <path d="M10 34V22h16v12h-4v-8h-8v8z" fill="#7fd0f0" stroke="#3a92d8" />
    </svg>
    <svg viewBox="0 0 32 34" className="ml-[28px] h-[34px] w-[32px] shrink-0">
      <path d="M4 3h24v26l-24 2z" fill="#7fb4d8" stroke="#5a8ab0" />
      <rect x="6" y="6" width="20" height="22" fill="#f0f4f8" />
      <circle cx="16" cy="17" r="9" fill="#f0701f" />
      <path d="M13 11l9 6-9 6z" fill="#fff" />
    </svg>
    <Tile className="ml-[15px]">
      <svg viewBox="0 0 32 32" className="h-[34px] w-[34px]">
        <circle cx="16" cy="16" r="15" fill="#1a6fc0" />
        <path d="M2 14C3 6 10 1 17 1c8 0 14 6 14 14 0 4-4 6-8 6-3 0-5-1-5-3 0-1 1-2 1-3 0-3-3-5-6-5-5 0-9 3-11 4z" fill="#35c1a0" />
        <path d="M18 18c-1 5 3 9 9 6-3 5-8 7-12 6-7-1-12-8-10-15 1-2 3-3 6-3 3 0 5 2 5 5 0 .5 2 1 2 1z" fill="#0f4fa0" />
      </svg>
    </Tile>
    <Tile className="ml-[2px]">
      <div className="flex h-[36px] w-[32px] items-center justify-center rounded-[6px] bg-[#0e0e0e]">
        <svg viewBox="0 0 24 30" className="h-[30px] w-[24px]" fill="none" stroke="#fff" strokeWidth="2">
          <path d="M2 10l20-7-9 9" strokeWidth="3" />
          <path d="M13 10l-3 4 4 1-1-5zM11 17L5 27h14l-6-10" />
        </svg>
      </div>
    </Tile>
    <Tile className="ml-[2px] from-[#e4ecf4] to-[#c4d6e6]">
      <VsMark fill="#8a5cc8" className="h-[30px] w-[32px]" />
    </Tile>
    <Tile className="ml-[2px]">
      <svg viewBox="0 0 30 34" className="h-[34px] w-[30px]">
        <path d="M8 3l19 3-5 26-19-4z" fill="#e8eef2" stroke="#7a8a94" />
        <path d="M8 7l16 3-4 19-15-3z" fill="#6fb6cc" />
        <path d="M8 3l19 3-.5 3L7.500 6z" fill="#3a5a78" />
      </svg>
    </Tile>
    <div className="ml-auto flex h-full w-[225px] shrink-0 items-center bg-linear-to-r from-transparent to-[#6e89a3] to-[25%]">
      <svg viewBox="0 0 9 5" className="ml-[46px] h-[5px] w-[9px] shrink-0"><path d="M0 5h9L4.500 0z" fill="#f4f4f4" /></svg>
      <svg viewBox="0 0 14 18" className="ml-[16px] h-[18px] w-[14px] shrink-0">
        <path d="M1 0v18" stroke="#fff" strokeWidth="1.500" />
        <path d="M2 1h9v10H2z" fill="#fff" />
        <circle cx="9" cy="12" r="4.500" fill="#d82a2a" stroke="#fff" />
        <path d="M7 10l4 4M11 10l-4 4" stroke="#fff" />
      </svg>
      <svg viewBox="0 0 14 18" className="ml-[10px] h-[18px] w-[14px] shrink-0" fill="none" stroke="#fff" strokeWidth="1.300">
        <path d="M5 5h8v8H5zM2 1h3v6H2zM9 13v3M5 16.500h8" />
      </svg>
      <svg viewBox="0 0 14 16" className="ml-[10px] h-[16px] w-[14px] shrink-0" fill="none" stroke="#fff" strokeWidth="1.200">
        <path d="M1 5.500h3L8 2v12L4 10.500H1z" fill="#fff" />
        <path d="M10 5c1 2 1 4 0 6M12 3c2 3 2 7 0 10" />
      </svg>
      <div className="ml-[18px] text-center text-[12px] leading-[16px] text-[#f4f4f4]">
        <div>5:39 PM</div>
        <div>7/9/2023</div>
      </div>
      <div className="ml-auto h-full w-[14px] border-l border-[#3a4a5a] bg-[#7e98b0]" />
    </div>
  </div>
);

export default function App() {
  return (
    <div className="relative flex h-[1080px] w-[1920px] flex-col overflow-hidden bg-[#1d1d1d] font-['Noto_Sans','Open_Sans',sans-serif] text-[11.5px] tracking-[-0.3px] text-[#dcdcdc]">
      <TitleBar />
      <Toolbar1 />
      <Toolbar2 />
      <div className="mt-[12px] flex h-[355px] shrink-0 pl-[6px]">
        <DocPanel />
        <DiagPanel />
        <SideStrip />
      </div>
      <div className="mt-[6px] flex h-[552px] shrink-0 pl-[6px]">
        <AutosPanel />
        <CallStackPanel />
      </div>
      <div className="h-[7px] shrink-0" />
      <StatusBar />
      <Taskbar />
      <ExceptionPopup />
    </div>
  );
}
